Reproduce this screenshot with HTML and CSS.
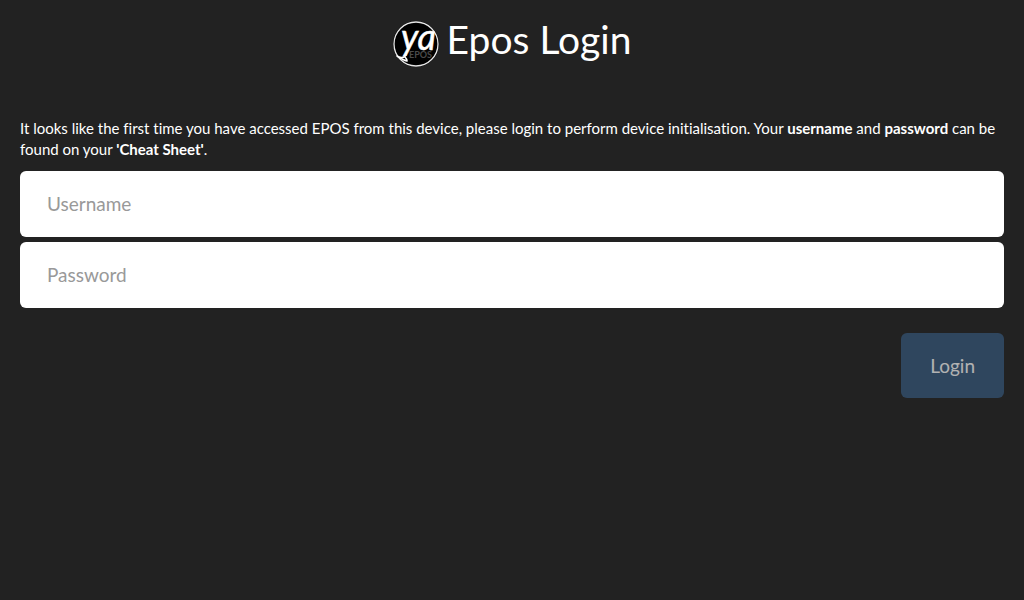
FILE: index.html
```html
<!DOCTYPE html>
<html lang="en">
<head>
    <meta charset="UTF-8">
    <meta name="viewport" content="width=device-width, initial-scale=1">
    <title>Epos Login</title>
    <link rel="stylesheet" href="styles.css">
</head>
<body>
<div class="container">
    <h1 class="title">
        <svg class="logo" viewBox="0 0 46 46" aria-hidden="true">
            <circle cx="23" cy="23" r="23" fill="#000"/>
            <circle cx="23" cy="23" r="22" fill="none" stroke="#e6e6e6" stroke-width="1.3"/>
            <text class="logo-sub" x="16" y="37">EPOS</text>
            <text class="logo-main" x="8" y="29">ya</text>
            <path d="M13 34C10 38 7 37 4 35C7 37 10 39 14 40C14 38 13 37 12 36" fill="none" stroke="#fff" stroke-width="1.6" stroke-linecap="round" stroke-linejoin="round"/>
        </svg>
        <span>Epos Login</span>
    </h1>

    <form class="login-form">
        <p class="intro">It looks like the first time you have accessed EPOS from this device, please login to perform device initialisation. Your <b>username</b> and <b>password</b> can be found on your <b>'Cheat Sheet'</b>.</p>
        <input class="form-input" type="text" id="username" placeholder="Username" aria-label="Username">
        <input class="form-input" type="password" id="password" placeholder="Password" aria-label="Password">
        <button class="btn-login" type="submit" disabled>Login</button>
    </form>
</div>
</body>
</html>
```
FILE: styles.css
```css
* {
    box-sizing: border-box;
}
body {
    margin: 0;
    background: #222;
    color: #fff;
    font-family: Lato, "Helvetica Neue", Arial, sans-serif;
    font-size: 15px;
    line-height: 21px;
    font-variant-ligatures: none;
}
.container {
    padding: 18px 20px;
}
.title {
    display: flex;
    justify-content: center;
    gap: 8px;
    margin: 0 0 51px;
    font-size: 39px;
    font-weight: 400;
    line-height: 43px;
}
.logo {
    width: 46px;
    height: 46px;
    margin-top: 3px;
    overflow: visible;
}
.logo-main {
    fill: #fff;
    font-family: Lato, sans-serif;
    font-size: 36px;
    font-style: italic;
    font-weight: 400;
    stroke: #fff;
    stroke-width: 0.5px;
}
.logo-sub {
    fill: #4a4a4a;
    font-family: Lato, sans-serif;
    font-size: 9px;
    font-weight: 700;
}
.login-form {
    display: flex;
    flex-direction: column;
    gap: 5px;
}
.intro {
    margin: 0 0 6px;
}
.form-input {
    width: 100%;
    height: 66px;
    padding: 17px 27px 19px;
    border: 0;
    border-radius: 6px;
    background: #fff;
    color: #464545;
    font-family: inherit;
    font-size: 19px;
}
.form-input::placeholder {
    color: #999;
}
.btn-login {
    align-self: flex-end;
    height: 65px;
    margin-top: 20px;
    padding: 18px 29px;
    border: 0;
    border-radius: 6px;
    background: #375a7f;
    color: #fff;
    font-family: inherit;
    font-size: 19px;
    opacity: 0.65;
}
```
